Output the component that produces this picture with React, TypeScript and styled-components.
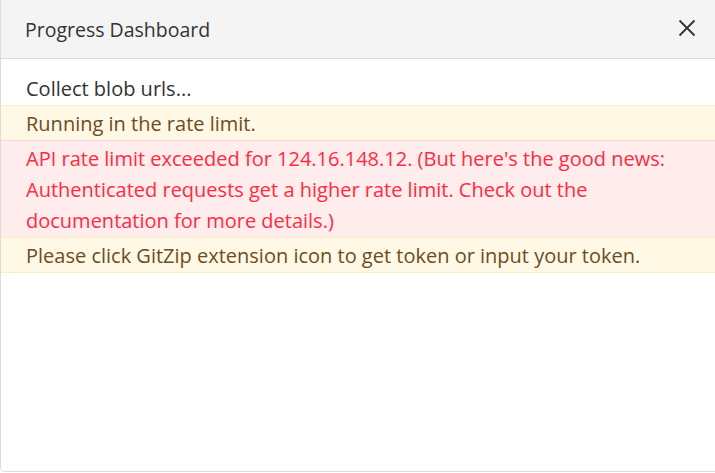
import React from 'react'
import styled, { createGlobalStyle } from 'styled-components'

const GlobalStyle = createGlobalStyle`
    html, body {
        margin: 0;
        padding: 0;
        background: #fff;
        overflow: hidden;
    }
    body {
        font-family: "Open Sans", "Noto Sans", sans-serif;
    }
`

const Panel = styled.div`
    box-sizing: border-box;
    height: 472px;
    width: calc(100% + 4px);
    border: 1px solid #dcdcdc;
    border-top: 0;
    border-radius: 0 0 5px 5px;
    background: #fff;
    display: flex;
    flex-direction: column;
`

const Header = styled.div`
    display: flex;
    align-items: center;
    justify-content: space-between;
    height: 58px;
    padding: 0 19px 0 24px;
    background: #f4f4f4;
    border-bottom: 1px solid #dcdcdc;
`

const Title = styled.span`
    font-size: 19.5px;
    color: #333;
`

const CloseButton = styled.button`
    display: flex;
    align-items: center;
    justify-content: center;
    width: 24px;
    height: 24px;
    padding: 0;
    margin-top: -2px;
    border: 0;
    background: transparent;
    color: #333;
    cursor: pointer;
`

const Body = styled.div`
    padding-top: 12px;
    display: flex;
    flex-direction: column;
`

type Tone = 'plain' | 'warn' | 'error'

const tones: Record<Tone, { bg: string; border: string; color: string }> = {
    plain: { bg: 'transparent', border: 'transparent', color: '#333' },
    warn: { bg: '#fff8e5', border: '#fdefc4', color: '#6b4d1f' },
    error: { bg: '#ffeced', border: '#fbd6d6', color: '#ff2b3f' },
}

const Row = styled.div<{ $tone: Tone }>`
    padding: 2px 24px 1px 25px;
    margin-top: -1px;
    font-size: 20px;
    line-height: 31px;
    color: ${p => tones[p.$tone].color};
    background: ${p => tones[p.$tone].bg};
    border-top: 1px solid ${p => tones[p.$tone].border};
    border-bottom: 1px solid ${p => tones[p.$tone].border};
`

const messages: { tone: Tone; text: string }[] = [
    { tone: 'plain', text: 'Collect blob urls...' },
    { tone: 'warn', text: 'Running in the rate limit.' },
    {
        tone: 'error',
        text: "API rate limit exceeded for 124.16.148.12. (But here's the good news: Authenticated requests get a higher rate limit. Check out the documentation for more details.)",
    },
    { tone: 'warn', text: 'Please click GitZip extension icon to get token or input your token.' },
]

export default function App() {
    return (
        <>
            <GlobalStyle />
            <Panel>
                <Header>
                    <Title>Progress Dashboard</Title>
                    <CloseButton aria-label="close">
                        <svg width="18" height="18" viewBox="0 0 18 18">
                            <path d="M1.5 1.5 L16.5 16.5 M16.5 1.5 L1.5 16.5" stroke="currentColor" strokeWidth="1.8" fill="none" />
                        </svg>
                    </CloseButton>
                </Header>
                <Body>
                    {messages.map((m, i) => (
                        <Row key={i} $tone={m.tone}>{m.text}</Row>
                    ))}
                </Body>
            </Panel>
        </>
    )
}
